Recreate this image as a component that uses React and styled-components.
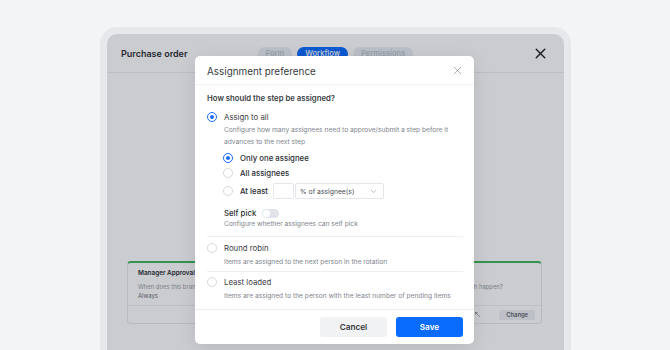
import React from 'react';
import styled, { createGlobalStyle } from 'styled-components';
import { X, ChevronDown, MoveUpLeft } from 'lucide-react';

const GlobalStyle = createGlobalStyle`
  html, body {
    margin: 0;
    padding: 0;
    background: #f3f4f6;
    font-family: Inter, "Noto Sans", sans-serif;
  }
  * { box-sizing: border-box; }
`;

const Page = styled.div`
  height: 350px;
  overflow: hidden;
  padding: 27px 0 0 100px;
`;

const Frame = styled.div`
  width: 471px;
  height: 340px;
  padding: 7px;
  background: #e6e8eb;
  border-radius: 17px;
`;

const Panel = styled.div`
  position: relative;
  height: 100%;
  background: #fff;
  border-radius: 10px;
  overflow: hidden;
`;

const PanelHeader = styled.div`
  height: 39px;
  display: grid;
  grid-template-columns: 1fr auto 1fr;
  align-items: center;
  padding: 0 14px;
  border-bottom: 1px solid #eceef1;
`;

const PanelTitle = styled.div`
  font-size: 9px;
  font-weight: 600;
  color: #2b2e33;
`;

const Tabs = styled.div`
  display: flex;
  gap: 5px;
  margin-top: 1px;
`;

const Tab = styled.div`
  height: 14px;
  padding: 0 8px;
  border-radius: 7px;
  font-size: 7.6px;
  line-height: 14px;
  font-weight: 500;
  background: ${p => (p.$active ? '#0a6cff' : '#eaeff5')};
  color: ${p => (p.$active ? '#fff' : '#b9c2cc')};
`;

const PanelClose = styled.div`
  justify-self: end;
  display: flex;
  color: #1f2226;
  margin-right: 1px;
`;

const Canvas = styled.div`
  display: flex;
  justify-content: space-between;
  align-items: flex-start;
  padding: 188px 22px 0 20px;
`;

const Card = styled.div`
  position: relative;
  width: 140px;
  background: #fff;
  border: 1px solid #e6e8eb;
  border-top: 2px solid #3fb55a;
  border-radius: 4px;
  ${p =>
    p.$stacked &&
    `
    &::before, &::after {
      content: '';
      position: absolute;
      background: #fff;
      border: 1px solid #e6e8eb;
      border-top: none;
      border-radius: 0 0 4px 4px;
      z-index: -1;
    }
    &::before { left: 4px; right: 4px; bottom: -4px; height: 10px; }
    &::after { left: 8px; right: 8px; bottom: -8px; height: 10px; }
  `}
`;

const CardBody = styled.div`
  padding: 5px 10px 5px;
`;

const CardTitle = styled.div`
  font-size: 6.4px;
  line-height: 10px;
  font-weight: 600;
  color: #2b2e33;
  white-space: nowrap;
`;

const CardText = styled.div`
  font-size: 5.9px;
  line-height: 9px;
  min-height: 9px;
  margin-top: ${p => p.$gap || 0}px;
  color: ${p => (p.$dark ? '#6a6f77' : '#979ca4')};
  white-space: nowrap;
`;

const CardFooter = styled.div`
  height: 18px;
  border-top: 1px solid #eef0f2;
  display: flex;
  align-items: center;
  padding: 0 6px 0 10px;
  color: #5c6168;
`;

const FooterIcon = styled.span`
  display: flex;
  margin-left: 61px;
`;

const SmallButton = styled.div`
  margin-left: auto;
  height: 10px;
  padding: 0 7px;
  border-radius: 2px;
  background: #eef0f3;
  font-size: 5.8px;
  line-height: 10px;
  font-weight: 600;
  color: #5d6269;
`;

const Overlay = styled.div`
  position: absolute;
  inset: 0;
  background: rgba(17, 24, 39, 0.22);
  z-index: 1;
`;

const Dialog = styled.div`
  position: absolute;
  left: 88px;
  top: 22px;
  width: 279px;
  z-index: 2;
  background: #fff;
  border-radius: 5px;
  box-shadow: 0 4px 18px rgba(0, 0, 0, 0.1);
`;

const DialogHeader = styled.div`
  height: 29px;
  display: flex;
  align-items: center;
  justify-content: space-between;
  padding: 0 10px 0 12px;
  border-bottom: 1px solid #f0f1f3;
`;

const DialogTitle = styled.div`
  font-size: 9.9px;
  color: #383b40;
  margin-top: 1px;
`;

const CloseBtn = styled.div`
  display: flex;
  color: #8d9198;
`;

const DialogBody = styled.div`
  padding: 7px 11px 0 12px;
`;

const Question = styled.div`
  font-size: 7.75px;
  line-height: 12px;
  font-weight: 600;
  color: #3a3d42;
`;

const Section = styled.div`
  padding: ${p => p.$pad};
  border-bottom: ${p => (p.$last ? 'none' : '1px solid #eceef1')};
`;

const Row = styled.label`
  display: flex;
  align-items: center;
  gap: 7px;
  height: ${p => p.$h || 12}px;
  margin-top: ${p => p.$mt || 0}px;
`;

const Radio = styled.span`
  flex: none;
  width: 10px;
  height: 10px;
  border-radius: 50%;
  border: ${p => (p.$checked ? '1.5px solid #1a6cf5' : '1px solid #d5d9de')};
  display: flex;
  align-items: center;
  justify-content: center;
  &::after {
    content: '';
    width: 4.5px;
    height: 4.5px;
    border-radius: 50%;
    background: ${p => (p.$checked ? '#1a6cf5' : 'transparent')};
  }
`;

const Label = styled.span`
  font-size: 7.8px;
  color: ${p => (p.$strong ? '#2a2d32' : '#3d4046')};
  font-weight: ${p => (p.$strong ? 500 : 400)};
`;

const Desc = styled.div`
  padding-left: ${p => p.$indent || 17}px;
  margin-top: ${p => p.$mt || 0}px;
  font-size: 6.65px;
  line-height: ${p => p.$lh || 12}px;
  color: #80858d;
  white-space: nowrap;
`;

const SubList = styled.div`
  display: flex;
  flex-direction: column;
  gap: 3px;
  padding-left: 16px;
  margin-top: 4px;
`;

const NumberBox = styled.div`
  width: 21px;
  height: 16px;
  border: 1px solid #e3e6ea;
  border-radius: 2px;
  margin-left: -2px;
`;

const Select = styled.div`
  width: 89px;
  height: 16px;
  border: 1px solid #e3e6ea;
  border-radius: 2px;
  margin-left: -6px;
  display: flex;
  align-items: center;
  justify-content: space-between;
  padding: 0 5px 0 4px;
  font-size: 6.8px;
  color: #4a4e55;
  svg { color: #8a8f96; }
`;

const SelfPick = styled.div`
  display: flex;
  align-items: center;
  gap: 6px;
  padding-left: 17px;
  margin-top: 8px;
  height: 12px;
`;

const Toggle = styled.span`
  width: 17px;
  height: 9px;
  border-radius: 5px;
  background: #e1e4e8;
  display: flex;
  align-items: center;
  padding: 1px;
  &::after {
    content: '';
    width: 7px;
    height: 7px;
    border-radius: 50%;
    background: #fff;
  }
`;

const DialogFooter = styled.div`
  height: 35px;
  border-top: 1px solid #eceef1;
  display: flex;
  justify-content: flex-end;
  align-items: center;
  gap: 9px;
  padding: 0 11px 0 0;
`;

const Button = styled.button`
  width: 67px;
  height: 20px;
  border: none;
  border-radius: 3px;
  font-family: inherit;
  font-size: 8.2px;
  font-weight: 600;
  background: ${p => (p.$primary ? '#0a6cff' : '#f1f2f4')};
  color: ${p => (p.$primary ? '#fff' : '#33363b')};
`;

export default function App() {
  return (
    <>
      <GlobalStyle />
      <Page>
        <Frame>
          <Panel>
            <PanelHeader>
              <PanelTitle>Purchase order</PanelTitle>
              <Tabs>
                <Tab>Form</Tab>
                <Tab $active>Workflow</Tab>
                <Tab>Permissions</Tab>
              </Tabs>
              <PanelClose>
                <X size={17} strokeWidth={2} />
              </PanelClose>
            </PanelHeader>

            <Canvas>
              <Card $stacked>
                <CardBody>
                  <CardTitle>Manager Approval</CardTitle>
                  <CardText $gap={4}>When does this branch happen?</CardText>
                  <CardText $dark>Always</CardText>
                </CardBody>
                <CardFooter />
              </Card>
              <Card>
                <CardBody>
                  <CardTitle>Director Approval</CardTitle>
                  <CardText $gap={4}>When does this branch happen?</CardText>
                  <CardText $dark />
                </CardBody>
                <CardFooter>
                  <FooterIcon>
                    <MoveUpLeft size={7} strokeWidth={2} />
                  </FooterIcon>
                  <SmallButton>Change</SmallButton>
                </CardFooter>
              </Card>
            </Canvas>

            <Overlay />

            <Dialog>
              <DialogHeader>
                <DialogTitle>Assignment preference</DialogTitle>
                <CloseBtn>
                  <X size={13} strokeWidth={1.4} />
                </CloseBtn>
              </DialogHeader>
              <DialogBody>
                <Question>How should the step be assigned?</Question>

                <Section $pad="7px 0 7px">
                  <Row>
                    <Radio $checked />
                    <Label>Assign to all</Label>
                  </Row>
                  <Desc $mt={1}>
                    Configure how many assignees need to approve/submit a step before it
                    <br />
                    advances to the next step
                  </Desc>
                  <SubList>
                    <Row>
                      <Radio $checked />
                      <Label $strong>Only one assignee</Label>
                    </Row>
                    <Row>
                      <Radio />
                      <Label $strong>All assignees</Label>
                    </Row>
                    <Row $h={16} $mt={1}>
                      <Radio />
                      <Label $strong>At least</Label>
                      <NumberBox />
                      <Select>
                        <span>% of assignee(s)</span>
                        <ChevronDown size={9} strokeWidth={1.6} />
                      </Select>
                    </Row>
                  </SubList>
                  <SelfPick>
                    <Label $strong>Self pick</Label>
                    <Toggle />
                  </SelfPick>
                  <Desc $lh={10}>Configure whether assignees can self pick</Desc>
                </Section>

                <Section $pad="4px 0 3px">
                  <Row $mt={1}>
                    <Radio />
                    <Label>Round robin</Label>
                  </Row>
                  <Desc $mt={2}>Items are assigned to the next person in the rotation</Desc>
                </Section>

                <Section $pad="4px 0 7px" $last>
                  <Row>
                    <Radio />
                    <Label>Least loaded</Label>
                  </Row>
                  <Desc $mt={2}>Items are assigned to the person with the least number of pending items</Desc>
                </Section>
              </DialogBody>
              <DialogFooter>
                <Button>Cancel</Button>
                <Button $primary>Save</Button>
              </DialogFooter>
            </Dialog>
          </Panel>
        </Frame>
      </Page>
    </>
  );
}
